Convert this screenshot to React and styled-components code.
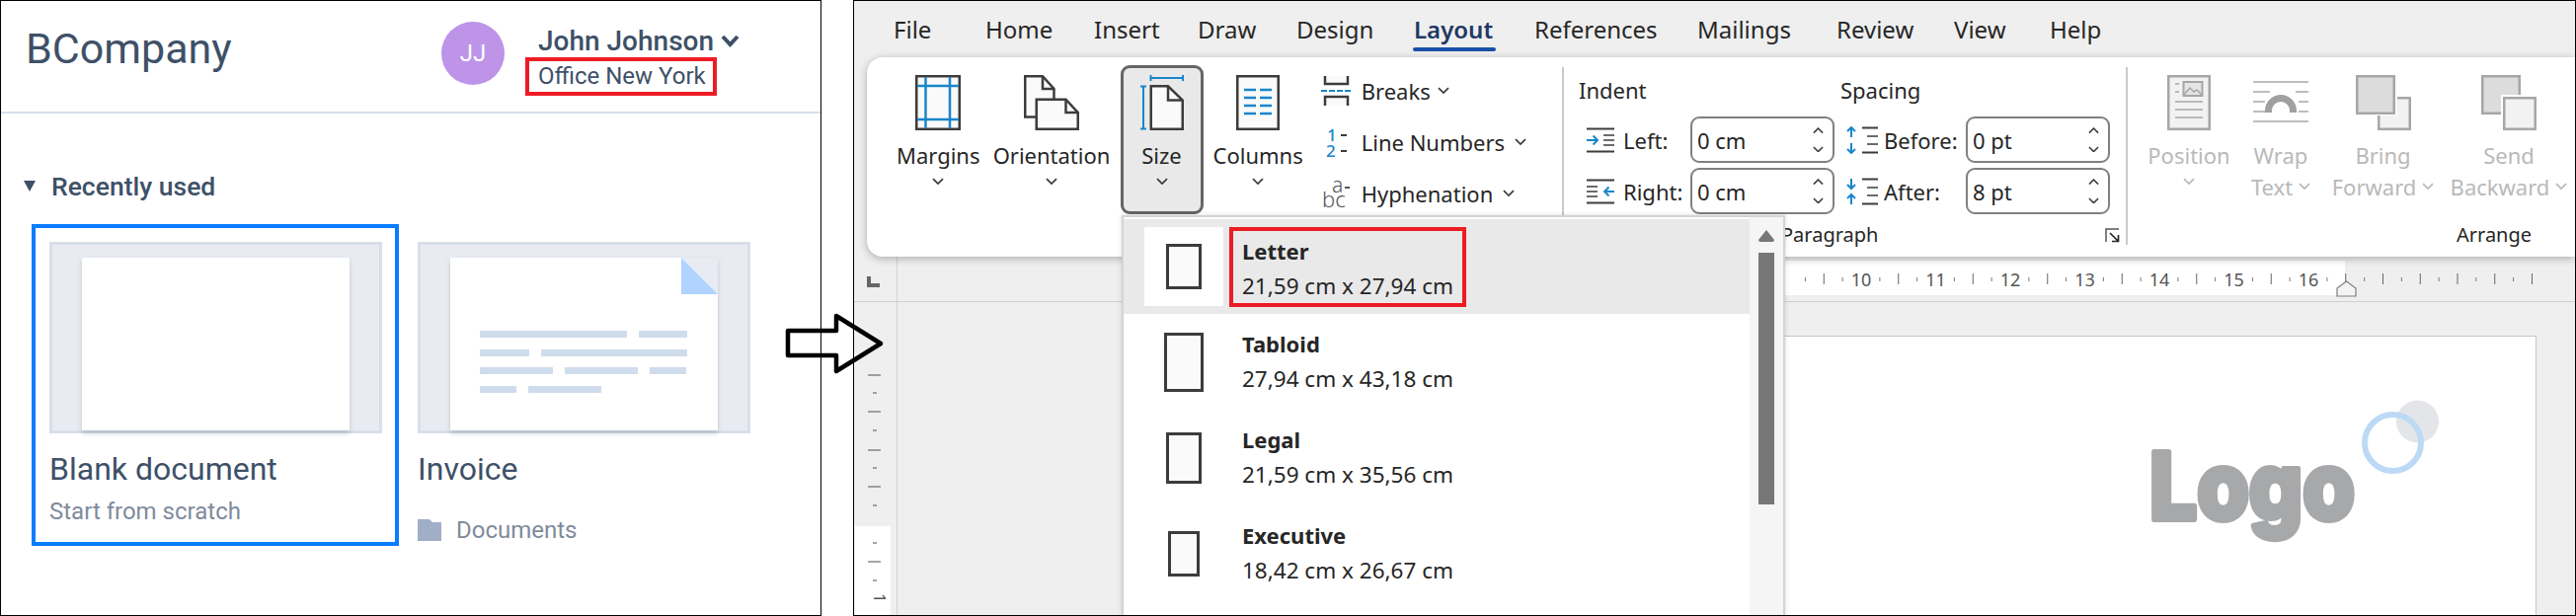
import React from "react";
import styled, { createGlobalStyle } from "styled-components";

const GlobalStyle = createGlobalStyle`
  html, body {
    margin: 0;
    padding: 0;
    background: #ffffff;
  }
  * {
    box-sizing: border-box;
  }
`;

const Page = styled.div`
  position: relative;
  display: flex;
  width: 2609px;
  height: 624px;
  overflow: hidden;
  background: #ffffff;
`;

/* ---------- left panel ---------- */

const LeftPanel = styled.div`
  width: 832px;
  height: 624px;
  border: 1px solid #000000;
  font-family: Roboto, "Liberation Sans", sans-serif;
  color: #3e5068;
`;

const Header = styled.header`
  display: flex;
  height: 114px;
  padding: 21px 0 0 25px;
  border-bottom: 2px solid #d8dfe9;
`;

const Brand = styled.div`
  flex: 0 0 421px;
  font-size: 43px;
  line-height: 54px;
`;

const Avatar = styled.div`
  display: flex;
  align-items: center;
  justify-content: center;
  width: 64px;
  height: 64px;
  border-radius: 50%;
  background: #bd94e8;
  color: #ffffff;
  font-size: 24px;
`;

const UserInfo = styled.div`
  margin: 3px 0 0 21px;
`;

const UserName = styled.div`
  display: flex;
  align-items: center;
  gap: 7px;
  height: 33px;
  padding-left: 13px;
  font-size: 28px;
  font-weight: 500;
`;

const OfficeBox = styled.div`
  width: 194px;
  height: 39px;
  padding-left: 9px;
  border: 4px solid #ed1c24;
  font-size: 24px;
  line-height: 31px;
  white-space: nowrap;
`;

const SectionTitle = styled.div`
  display: flex;
  align-items: center;
  gap: 16px;
  height: 30px;
  margin: 58px 0 24px 23px;
  font-size: 26.5px;
  font-weight: 500;
`;

const Caret = styled.span`
  width: 0;
  height: 0;
  border-left: 6px solid transparent;
  border-right: 6px solid transparent;
  border-top: 11px solid #3e5068;
`;

const Cards = styled.div`
  display: flex;
  gap: 1px;
  padding-left: 31px;
`;

const Card = styled.div`
  width: 372px;
  height: 326px;
  padding: 14px;
  border: 4px solid ${(p) => (p.$selected ? "#0a7cff" : "transparent")};
`;

const Thumb = styled.div`
  display: flex;
  justify-content: center;
  width: 337px;
  height: 194px;
  padding-top: 13px;
  border: 3px solid #d8dfe8;
  background: #e8ecf2;
`;

const Sheet = styled.div`
  position: relative;
  width: 271px;
  height: 175px;
  padding: 74px 0 0 30px;
  background: #ffffff;
  box-shadow: 0 3px 5px rgba(60, 70, 90, 0.22);
`;

const SheetFold = styled.svg`
  position: absolute;
  top: 0;
  right: 0;
`;

const BarRow = styled.div`
  display: flex;
  gap: 12px;
  margin-bottom: 11.5px;
`;

const Bar = styled.span`
  width: ${(p) => p.$w}px;
  height: 7px;
  background: #cfdcec;
`;

const CardTitle = styled.div`
  margin-top: 16px;
  font-size: 32px;
  line-height: 40px;
`;

const CardSub = styled.div`
  margin-top: 9px;
  font-size: 24px;
  line-height: 28px;
  color: #7f8b9b;
`;

const CardFolder = styled.div`
  display: flex;
  align-items: center;
  gap: 15px;
  margin-top: 28px;
  font-size: 24px;
  line-height: 28px;
  color: #7f8b9b;
`;

/* ---------- right panel ---------- */

const RightPanel = styled.div`
  position: relative;
  display: flex;
  flex-direction: column;
  width: 1745px;
  height: 624px;
  margin-left: 32px;
  border: 1px solid #000000;
  overflow: hidden;
  background: #efefef;
  font-family: "Noto Sans", "Open Sans", sans-serif;
  color: #262626;
`;

const TabBar = styled.nav`
  display: flex;
  gap: 40px;
  flex: 0 0 57px;
  padding: 13px 0 0 40px;
  font-size: 24px;
  line-height: 32px;
`;

const Tab = styled.div`
  position: relative;
  width: ${(p) => p.$w}px;
  white-space: nowrap;
  font-weight: ${(p) => (p.$active ? 600 : 400)};
  color: ${(p) => (p.$active ? "#1f3864" : "#262626")};

  &::after {
    content: "";
    display: ${(p) => (p.$active ? "block" : "none")};
    height: 4px;
    width: 84px;
    margin: 2px 0 0 -1px;
    border-radius: 2px;
    background: #1850a8;
  }
`;

const Ribbon = styled.section`
  position: relative;
  z-index: 1;
  display: flex;
  flex: 0 0 200px;
  margin-left: 13px;
  padding: 8px 0;
  border-radius: 16px 0 0 16px;
  background: #ffffff;
  box-shadow: 0 2px 8px rgba(0, 0, 0, 0.28);
  font-size: 22px;
  line-height: 32px;
`;

const PageSetup = styled.div`
  display: flex;
  flex: 0 0 704px;
  gap: 7px;
  padding-left: 27px;
`;

const Divider = styled.div`
  flex: 0 0 2px;
  margin: 2px 0 4px;
  background: #c9c9c9;
`;

const LargeButton = styled.div`
  display: flex;
  flex-direction: column;
  align-items: center;
  flex: 0 0 ${(p) => p.$w}px;
  height: 151px;
  padding-top: 7px;
  border: 3px solid ${(p) => (p.$open ? "#666666" : "transparent")};
  border-radius: 9px;
  background: ${(p) => (p.$open ? "#e9e9e9" : "transparent")};
  color: ${(p) => (p.$disabled ? "#b9b9b9" : "#262626")};
`;

const LargeIcon = styled.svg`
  flex: 0 0 56px;
  margin-bottom: 9px;
`;

const LargeLabel = styled.div`
  display: flex;
  align-items: center;
  gap: 6px;
  white-space: nowrap;
`;

const LargeChevron = styled.div`
  display: flex;
  margin-top: 7px;
`;

const SmallList = styled.div`
  margin-left: 8px;
`;

const SmallRow = styled.div`
  display: flex;
  align-items: center;
  height: 52px;
`;

const SmallIcon = styled.svg`
  flex: 0 0 30px;
  margin-right: 11px;
  overflow: visible;
`;

const SmallChevron = styled.span`
  display: flex;
  margin-left: ${(p) => p.$gap || 10}px;
`;

const Paragraph = styled.div`
  display: flex;
  flex-direction: column;
  flex: 0 0 569px;
  padding-left: 15px;
`;

const ParagraphColumns = styled.div`
  display: flex;
  gap: 6px;
`;

const FieldColumn = styled.div`
  display: flex;
  flex-direction: column;
  gap: 5px;
  width: ${(p) => p.$w}px;
`;

const FieldHeading = styled.div`
  height: 47px;
  padding-top: 9px;
`;

const FieldRow = styled.div`
  display: flex;
  align-items: center;
  height: 47px;
  padding-left: ${(p) => p.$pad}px;
`;

const FieldIcon = styled.svg`
  margin-right: ${(p) => p.$gap}px;
`;

const Spin = styled.div`
  display: flex;
  align-items: center;
  justify-content: space-between;
  width: 146px;
  height: 47px;
  margin-left: auto;
  padding: 0 9px 0 5px;
  border: 2px solid #808080;
  border-radius: 9px;
  background: #ffffff;
`;

const Stepper = styled.div`
  display: flex;
  flex-direction: column;
  gap: 12px;
`;

const GroupFooter = styled.div`
  display: flex;
  align-items: center;
  height: 28px;
  margin-top: 7px;
  padding-left: ${(p) => p.$pad}px;
  font-size: 20px;
`;

const Launcher = styled.svg`
  margin: 0 6px 0 auto;
`;

const Arrange = styled.div`
  display: flex;
  flex-direction: column;
  padding-left: 16px;
`;

const ArrangeRow = styled.div`
  display: flex;
  gap: 7px;
`;

const RulerRow = styled.div`
  display: flex;
  flex: 0 0 46px;
  border-bottom: 1px solid #cfcfcf;
`;

const RulerCorner = styled.div`
  flex: 0 0 44px;
  padding: 20px 0 0 13px;
  border-right: 1px solid #d2d2d2;
`;

const CornerMark = styled.div`
  width: 13px;
  height: 11px;
  border-left: 4px solid #666666;
  border-bottom: 4px solid #666666;
`;

const DocRow = styled.div`
  display: flex;
  flex: 1;
  min-height: 0;
`;

const VRuler = styled.div`
  flex: 0 0 44px;
  border-right: 1px solid #d2d2d2;
`;

const DocArea = styled.div`
  display: flex;
  flex: 1;
  padding: 34px 39px 0 400px;
`;

const DocPage = styled.div`
  position: relative;
  flex: 1;
  border: 1px solid #c6c6c6;
  border-bottom: none;
  background: #ffffff;
`;

const DocLogo = styled.svg`
  position: absolute;
  top: 60px;
  right: 93px;
`;

/* ---------- size menu ---------- */

const SizeMenu = styled.div`
  position: absolute;
  z-index: 2;
  top: 217px;
  left: 271px;
  bottom: 0;
  display: flex;
  width: 672px;
  border: 2px solid #d4d4d4;
  border-bottom: none;
  background: #ffffff;
  box-shadow: 0 0 5px rgba(0, 0, 0, 0.15);
`;

const SizeList = styled.div`
  flex: 1;
  padding-top: 2px;
`;

const SizeRow = styled.div`
  display: flex;
  align-items: center;
  height: ${(p) => (p.$selected ? 96 : 97)}px;
  padding-left: 21px;
  background: ${(p) => (p.$selected ? "#e9e9e9" : "#ffffff")};
`;

const SizeIconCell = styled.div`
  display: flex;
  align-items: center;
  justify-content: center;
  flex: 0 0 80px;
  height: 80px;
  margin-right: 6px;
  background: #ffffff;
`;

const SizeGlyph = styled.div`
  width: ${(p) => p.$w}px;
  height: ${(p) => p.$h}px;
  border: 3px solid #3c3c3c;
  background: #fafafa;
`;

const SizeText = styled.div`
  width: 240px;
  height: 81px;
  padding: ${(p) => (p.$selected ? 2 : 0)}px 0 0 9px;
  border: 4px solid ${(p) => (p.$selected ? "#ed1c24" : "transparent")};
  line-height: 36px;
  white-space: nowrap;
`;

const SizeName = styled.div`
  font-size: 22px;
  font-weight: 700;
`;

const SizeDim = styled.div`
  font-size: 22.5px;
`;

const Scrollbar = styled.div`
  display: flex;
  flex-direction: column;
  align-items: center;
  flex: 0 0 34px;
  padding-top: 12px;
  background: #f5f5f5;
`;

const ScrollThumb = styled.div`
  width: 16px;
  height: 255px;
  margin-top: 10px;
  background: #777777;
`;

const FlowArrow = styled.svg`
  position: absolute;
  z-index: 3;
  top: 312px;
  left: 790px;
`;

/* ---------- drawings ---------- */

const INK = "#3c3c3c";
const BLUE = "#1a86cb";
const GRAY = "#a6a6a6";

function Chevron({ color = "#3c3c3c", width = 12, up = false }) {
  return (
    <svg width={width} height={width * 0.6} viewBox="0 0 12 7">
      <polyline
        points={up ? "1,6 6,1 11,6" : "1,1 6,6 11,1"}
        fill="none"
        stroke={color}
        strokeWidth="1.7"
      />
    </svg>
  );
}

function MarginsIcon() {
  return (
    <LargeIcon width="46" height="56" viewBox="0 0 46 56">
      <rect x="1.25" y="1.25" width="43.5" height="53.5" fill="#fafafa" stroke={INK} strokeWidth="2.5" />
      <path d="M10.5 2V54M35 2V54M2 11H44M2 45H44" stroke={BLUE} strokeWidth="2.5" fill="none" />
    </LargeIcon>
  );
}

function OrientationIcon() {
  return (
    <LargeIcon width="56" height="56" viewBox="0 0 56 56">
      <path d="M12 42.5H1.25V1.25H19L30.5 14V24" fill="#fafafa" stroke={INK} strokeWidth="2.5" />
      <path d="M19 1.25V14H30.5" fill="none" stroke={INK} strokeWidth="2.5" />
      <path d="M12.75 24.75H42.5L54.75 38V54.75H12.75Z" fill="#fafafa" stroke={INK} strokeWidth="2.5" />
      <path d="M42.5 24.75V38H54.75" fill="none" stroke={INK} strokeWidth="2.5" />
    </LargeIcon>
  );
}

function SizeIcon() {
  return (
    <LargeIcon width="44" height="56" viewBox="0 0 44 56">
      <path d="M10.5 3H43M10.5 0V6M43 0V6" stroke={BLUE} strokeWidth="2" fill="none" />
      <path d="M3 11V55M0 11.5H6M0 54.5H6" stroke={BLUE} strokeWidth="2" fill="none" />
      <path d="M10.75 11.25H28L42.75 25.5V54.75H10.75Z" fill="#fafafa" stroke={INK} strokeWidth="2.5" />
      <path d="M28 11.25V25.5H42.75" fill="none" stroke={INK} strokeWidth="2.5" />
    </LargeIcon>
  );
}

function ColumnsIcon() {
  return (
    <LargeIcon width="44" height="56" viewBox="0 0 44 56">
      <rect x="1.25" y="1.25" width="41.5" height="53.5" fill="#fafafa" stroke={INK} strokeWidth="2.5" />
      <path d="M8 15H20M24 15H36M8 23H20M24 23H36M8 31H20M24 31H36M8 39H20M24 39H36" stroke={BLUE} strokeWidth="2.5" fill="none" />
    </LargeIcon>
  );
}

function PositionIcon() {
  return (
    <LargeIcon width="44" height="56" viewBox="0 0 44 56">
      <rect x="1.25" y="1.25" width="41.5" height="53.5" fill="#f2f2f2" stroke={GRAY} strokeWidth="2.5" />
      <rect x="16.5" y="7" width="19" height="14" fill="#e4e4e4" stroke={GRAY} strokeWidth="2" />
      <path d="M17 20L23 13L27 17L30 15L35 20" fill="none" stroke={GRAY} strokeWidth="1.5" />
      <path d="M8 9H12M8 17H12M8 27H36M8 35H36M8 43H36" stroke={GRAY} strokeWidth="1.5" fill="none" />
    </LargeIcon>
  );
}

function WrapIcon() {
  return (
    <LargeIcon width="56" height="56" viewBox="0 0 56 56">
      <path d="M0 7H56M0 47H56M0 17H17M43 17H56M0 27H12M46 27H56M0 37H12M46 37H56" stroke="#bdbdbd" strokeWidth="2" fill="none" />
      <path d="M15.5 38V36A12.5 12.5 0 0 1 40.5 36V38" fill="none" stroke="#a0a0a0" strokeWidth="7" />
    </LargeIcon>
  );
}

function BringIcon() {
  return (
    <LargeIcon width="56" height="56" viewBox="0 0 56 56">
      <rect x="23.25" y="23.25" width="31.5" height="31.5" fill="#f2f2f2" stroke={GRAY} strokeWidth="2.5" />
      <rect x="0" y="0" width="42" height="41" fill="#ffffff" />
      <rect x="1.25" y="1.25" width="37.5" height="37.5" fill="#dcdcdc" stroke={GRAY} strokeWidth="2.5" />
    </LargeIcon>
  );
}

function SendIcon() {
  return (
    <LargeIcon width="56" height="56" viewBox="0 0 56 56">
      <rect x="1.25" y="1.25" width="37.5" height="37.5" fill="#dcdcdc" stroke={GRAY} strokeWidth="2.5" />
      <rect x="20" y="20" width="36" height="36" fill="#ffffff" />
      <rect x="23.25" y="23.25" width="31.5" height="31.5" fill="#f2f2f2" stroke={GRAY} strokeWidth="2.5" />
    </LargeIcon>
  );
}

function BreaksIcon() {
  return (
    <SmallIcon width="30" height="30" viewBox="0 0 30 30">
      <path d="M4 0V8H27V0" fill="#fafafa" stroke={INK} strokeWidth="2.5" />
      <path d="M0 15H30" stroke={BLUE} strokeWidth="2" strokeDasharray="6 2" />
      <path d="M4 30V21H27V30" fill="#fafafa" stroke={INK} strokeWidth="2.5" />
    </SmallIcon>
  );
}

function LineNumbersIcon() {
  return (
    <SmallIcon width="30" height="38" viewBox="0 0 30 38">
      <text x="6" y="18" fontFamily="Noto Sans" fontSize="17" fontWeight="500" fill={BLUE}>1</text>
      <text x="5" y="34" fontFamily="Noto Sans" fontSize="17" fontWeight="500" fill={BLUE}>2</text>
      <path d="M20 12H26M20 28H26" stroke={INK} strokeWidth="2" />
    </SmallIcon>
  );
}

function HyphenIcon() {
  return (
    <SmallIcon width="30" height="38" viewBox="0 0 30 38">
      <text x="11" y="18" fontFamily="Noto Sans" fontSize="21" fontWeight="300" fill="#555555">a</text>
      <path d="M24 13H29" stroke="#555555" strokeWidth="2" />
      <text x="1" y="33" fontFamily="Noto Sans" fontSize="22" fontWeight="300" fill="#555555">bc</text>
    </SmallIcon>
  );
}

function IndentIcon({ right }) {
  return (
    <FieldIcon $gap={9} width="28" height="26" viewBox="0 0 28 26">
      <path d="M0 1.5H28M0 24.5H28" stroke={INK} strokeWidth="2" />
      {right ? (
        <>
          <path d="M0 8H11M0 13H11M0 18H11" stroke={INK} strokeWidth="1.6" />
          <path d="M28 13H18M22.5 8.5L18 13L22.5 17.5" stroke={BLUE} strokeWidth="2" fill="none" />
        </>
      ) : (
        <>
          <path d="M17 8H28M17 13H28M17 18H28" stroke={INK} strokeWidth="1.6" />
          <path d="M0 13H11M6.5 8.5L11 13L6.5 17.5" stroke={BLUE} strokeWidth="2" fill="none" />
        </>
      )}
    </FieldIcon>
  );
}

function SpacingIcon({ after }) {
  const arrows = after
    ? "M5 1V11M1 7L5 11L9 7M5 27V17M1 21L5 17L9 21"
    : "M5 11V1M1 5L5 1L9 5M5 17V27M1 23L5 27L9 23";
  return (
    <FieldIcon $gap={6} width="32" height="28" viewBox="0 0 32 28">
      <path d={arrows} stroke={BLUE} strokeWidth="2" fill="none" />
      <path d="M16 1.5H32M16 26.5H32" stroke={INK} strokeWidth="2" />
      <path d="M21 10H32M21 18H32" stroke={INK} strokeWidth="1.6" />
    </FieldIcon>
  );
}

function SpinField({ value }) {
  return (
    <Spin>
      <span>{value}</span>
      <Stepper>
        <Chevron width={11} up />
        <Chevron width={11} />
      </Stepper>
    </Spin>
  );
}

function HorizontalRuler() {
  const marks = [];
  for (let i = -3; i <= 36; i++) {
    const x = 1885 + i * 18.875 - 909;
    const kind = i % 4 === 0 ? "num" : i % 2 === 0 ? "long" : "small";
    if (kind === "num" && i <= 24) {
      marks.push(
        <text key={i} x={x} y="30" textAnchor="middle" fontFamily="Noto Sans" fontSize="18" fill="#555555">
          {10 + i / 4}
        </text>
      );
    } else if (kind === "small") {
      marks.push(<line key={i} x1={x} x2={x} y1="21" y2="25" stroke="#777777" strokeWidth="1" />);
    } else {
      marks.push(<line key={i} x1={x} x2={x} y1="17" y2="28" stroke="#666666" strokeWidth="1" />);
    }
  }
  return (
    <svg width="1698" height="45" viewBox="0 0 1698 45">
      <rect x="300" y="4" width="1166" height="35" fill="#ffffff" />
      {marks}
      <path d="M1458 40V32L1467.5 25L1477 32V40Z" fill="#f4f4f4" stroke="#7f7f7f" strokeWidth="1.2" />
    </svg>
  );
}

function VerticalRuler() {
  const longs = [379, 416, 455, 492, 568];
  const smalls = [397, 435, 473, 511, 549, 587];
  return (
    <svg width="43" height="318" viewBox="0 0 43 318">
      <rect x="1" y="227" width="36" height="91" fill="#ffffff" />
      {longs.map((y) => (
        <line key={y} x1="14" x2="27" y1={y - 305} y2={y - 305} stroke="#6a6a6a" strokeWidth="1.2" />
      ))}
      {smalls.map((y) => (
        <line key={y} x1="19" x2="23" y1={y - 305} y2={y - 305} stroke="#6a6a6a" strokeWidth="1.2" />
      ))}
      <text x="14" y="301" transform="rotate(90 20 301)" fontFamily="Noto Sans" fontSize="17" fill="#555555">1</text>
    </svg>
  );
}

const TABS = [
  ["File", 53],
  ["Home", 70],
  ["Insert", 65],
  ["Draw", 60],
  ["Design", 79],
  ["Layout", 82, true],
  ["References", 125],
  ["Mailings", 101],
  ["Review", 79],
  ["View", 57],
  ["Help", 55],
];

const SIZES = [
  { name: "Letter", dim: "21,59 cm x 27,94 cm", w: 36, h: 46, selected: true },
  { name: "Tabloid", dim: "27,94 cm x 43,18 cm", w: 40, h: 60 },
  { name: "Legal", dim: "21,59 cm x 35,56 cm", w: 36, h: 52 },
  { name: "Executive", dim: "18,42 cm x 26,67 cm", w: 32, h: 46 },
];

const BAR_ROWS = [
  [149, 49],
  [50, 148],
  [74, 74, 37],
  [37, 74],
];

export default function App() {
  return (
    <Page>
      <GlobalStyle />
      <LeftPanel>
        <Header>
          <Brand>BCompany</Brand>
          <Avatar>JJ</Avatar>
          <UserInfo>
            <UserName>
              John Johnson
              <svg width="19" height="13" viewBox="0 0 19 13">
                <polyline points="2,2 9.5,10 17,2" fill="none" stroke="#3e5068" strokeWidth="4" />
              </svg>
            </UserName>
            <OfficeBox>Office New York</OfficeBox>
          </UserInfo>
        </Header>
        <SectionTitle>
          <Caret />
          Recently used
        </SectionTitle>
        <Cards>
          <Card $selected>
            <Thumb>
              <Sheet />
            </Thumb>
            <CardTitle>Blank document</CardTitle>
            <CardSub>Start from scratch</CardSub>
          </Card>
          <Card>
            <Thumb>
              <Sheet>
                <SheetFold width="37" height="37" viewBox="0 0 37 37">
                  <polygon points="0,0 37,0 37,37" fill="#e8ecf2" />
                  <polygon points="0,0 37,37 0,37" fill="#b0d4ff" />
                </SheetFold>
                {BAR_ROWS.map((row, i) => (
                  <BarRow key={i}>
                    {row.map((w, j) => (
                      <Bar key={j} $w={w} />
                    ))}
                  </BarRow>
                ))}
              </Sheet>
            </Thumb>
            <CardTitle>Invoice</CardTitle>
            <CardFolder>
              <svg width="24" height="22" viewBox="0 0 24 22">
                <path d="M0 0H12L15 3H24V22H0Z" fill="#a0aec8" />
              </svg>
              Documents
            </CardFolder>
          </Card>
        </Cards>
      </LeftPanel>

      <RightPanel>
        <TabBar>
          {TABS.map(([label, w, active]) => (
            <Tab key={label} $w={w} $active={active}>
              {label}
            </Tab>
          ))}
        </TabBar>

        <Ribbon>
          <PageSetup>
            <LargeButton $w={90}>
              <MarginsIcon />
              <LargeLabel>Margins</LargeLabel>
              <LargeChevron><Chevron /></LargeChevron>
            </LargeButton>
            <LargeButton $w={125}>
              <OrientationIcon />
              <LargeLabel>Orientation</LargeLabel>
              <LargeChevron><Chevron /></LargeChevron>
            </LargeButton>
            <LargeButton $w={84} $open>
              <SizeIcon />
              <LargeLabel>Size</LargeLabel>
              <LargeChevron><Chevron /></LargeChevron>
            </LargeButton>
            <LargeButton $w={97}>
              <ColumnsIcon />
              <LargeLabel>Columns</LargeLabel>
              <LargeChevron><Chevron /></LargeChevron>
            </LargeButton>
            <SmallList>
              <SmallRow>
                <BreaksIcon />
                Breaks
                <SmallChevron $gap={7}><Chevron /></SmallChevron>
              </SmallRow>
              <SmallRow>
                <LineNumbersIcon />
                Line Numbers
                <SmallChevron><Chevron /></SmallChevron>
              </SmallRow>
              <SmallRow>
                <HyphenIcon />
                Hyphenation
                <SmallChevron><Chevron /></SmallChevron>
              </SmallRow>
            </SmallList>
          </PageSetup>
          <Divider />
          <Paragraph>
            <ParagraphColumns>
              <FieldColumn $w={259}>
                <FieldHeading>Indent</FieldHeading>
                <FieldRow $pad={8}>
                  <IndentIcon />
                  Left:
                  <SpinField value="0 cm" />
                </FieldRow>
                <FieldRow $pad={8}>
                  <IndentIcon right />
                  Right:
                  <SpinField value="0 cm" />
                </FieldRow>
              </FieldColumn>
              <FieldColumn $w={273}>
                <FieldHeading>Spacing</FieldHeading>
                <FieldRow $pad={6}>
                  <SpacingIcon />
                  Before:
                  <SpinField value="0 pt" />
                </FieldRow>
                <FieldRow $pad={6}>
                  <SpacingIcon after />
                  After:
                  <SpinField value="8 pt" />
                </FieldRow>
              </FieldColumn>
            </ParagraphColumns>
            <GroupFooter $pad={205}>
              Paragraph
              <Launcher width="15" height="15" viewBox="0 0 15 15">
                <path d="M1 14V1H14" fill="none" stroke="#555555" strokeWidth="1.5" />
                <path d="M5 5L13.5 13.5M13.5 7V13.5H7" fill="none" stroke="#262626" strokeWidth="1.7" />
              </Launcher>
            </GroupFooter>
          </Paragraph>
          <Divider />
          <Arrange>
            <ArrangeRow>
              <LargeButton $w={92} $disabled>
                <PositionIcon />
                <LargeLabel>Position</LargeLabel>
                <LargeChevron><Chevron color="#b9b9b9" /></LargeChevron>
              </LargeButton>
              <LargeButton $w={80} $disabled>
                <WrapIcon />
                <LargeLabel>Wrap</LargeLabel>
                <LargeLabel>Text<Chevron color="#b9b9b9" /></LargeLabel>
              </LargeButton>
              <LargeButton $w={113} $disabled>
                <BringIcon />
                <LargeLabel>Bring</LargeLabel>
                <LargeLabel>Forward<Chevron color="#b9b9b9" /></LargeLabel>
              </LargeButton>
              <LargeButton $w={128} $disabled>
                <SendIcon />
                <LargeLabel>Send</LargeLabel>
                <LargeLabel>Backward<Chevron color="#b9b9b9" /></LargeLabel>
              </LargeButton>
            </ArrangeRow>
            <GroupFooter $pad={317}>Arrange</GroupFooter>
          </Arrange>
        </Ribbon>

        <RulerRow>
          <RulerCorner>
            <CornerMark />
          </RulerCorner>
          <HorizontalRuler />
        </RulerRow>

        <DocRow>
          <VRuler>
            <VerticalRuler />
          </VRuler>
          <DocArea>
            <DocPage>
              <DocLogo width="305" height="155" viewBox="0 0 305 155">
                <circle cx="278.5" cy="26" r="21.5" fill="#e4e5e9" />
                <circle cx="253.5" cy="47.5" r="28.5" fill="none" stroke="#bcdaf5" strokeWidth="6" />
                <text
                  x="7"
                  y="125"
                  fontFamily="Inter, Lato, sans-serif"
                  fontSize="94"
                  fontWeight="800"
                  textLength="208"
                  lengthAdjust="spacingAndGlyphs"
                  fill="#a7a8aa"
                  stroke="#a7a8aa"
                  strokeWidth="6"
                  strokeLinejoin="round"
                >
                  Logo
                </text>
              </DocLogo>
            </DocPage>
          </DocArea>
        </DocRow>

        <SizeMenu>
          <SizeList>
            {SIZES.map((s) => (
              <SizeRow key={s.name} $selected={s.selected}>
                <SizeIconCell>
                  <SizeGlyph $w={s.w} $h={s.h} />
                </SizeIconCell>
                <SizeText $selected={s.selected}>
                  <SizeName>{s.name}</SizeName>
                  <SizeDim>{s.dim}</SizeDim>
                </SizeText>
              </SizeRow>
            ))}
          </SizeList>
          <Scrollbar>
            <svg width="18" height="14" viewBox="0 0 18 14">
              <path d="M9 1L17 11Q17 13 15 13H3Q1 13 1 11Z" fill="#777777" />
            </svg>
            <ScrollThumb />
          </Scrollbar>
        </SizeMenu>
      </RightPanel>

      <FlowArrow width="112" height="72" viewBox="0 0 112 72">
        <path
          d="M8 23H57V8L102 36L57 64V48H8Z"
          fill="none"
          stroke="#000000"
          strokeWidth="4.5"
          strokeLinejoin="round"
        />
      </FlowArrow>
    </Page>
  );
}
